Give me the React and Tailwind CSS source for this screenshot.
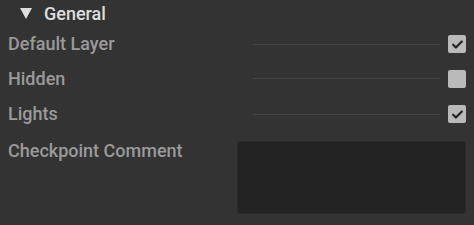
import React from 'react';

const Check = ({ checked }) => (
  <div className="w-[18px] h-[18px] rounded-[2px] bg-[#bababa] flex items-center justify-center shrink-0">
    {checked && (
      <svg width="13" height="13" viewBox="0 0 24 24" fill="none" stroke="#222" strokeWidth="4" strokeLinecap="round" strokeLinejoin="round">
        <path d="M4 12.5l5 5L20 6.5" />
      </svg>
    )}
  </div>
);

const BoolRow = ({ label, checked, h }) => (
  <div className={`flex items-center ${h}`}>
    <div className="w-[245px] text-[18px] leading-[20px] font-medium text-[#9a9a9a]">{label}</div>
    <div className="flex-1 h-px bg-[#444444] mr-[8px]" />
    <Check checked={checked} />
  </div>
);

export default function App() {
  return (
    <div className="w-[474px] h-[225px] bg-[#333333] overflow-hidden" style={{ fontFamily: 'Roboto, "Noto Sans", sans-serif' }}>
      <div className="px-2">
        <div className="flex items-center h-[27px] pl-[12px] text-[#dedede] text-[18px] leading-[20px] font-medium">
          <svg width="12" height="11" viewBox="0 0 12 11" className="mr-[12px]">
            <path d="M0 0h12L6 11z" fill="#dedede" />
          </svg>
          <span>General</span>
        </div>
        <BoolRow label="Default Layer" checked h="h-[34px]" />
        <BoolRow label="Hidden" checked={false} h="h-[35px]" />
        <BoolRow label="Lights" checked h="h-[36px]" />
        <div className="flex mt-[9px]">
          <div className="w-[229px] text-[18px] leading-[20px] font-medium text-[#9a9a9a]">Checkpoint Comment</div>
          <div className="flex-1 h-[73px] bg-[#232323] rounded-[3px] border border-[#2a2a2a]" />
        </div>
      </div>
    </div>
  );
}
